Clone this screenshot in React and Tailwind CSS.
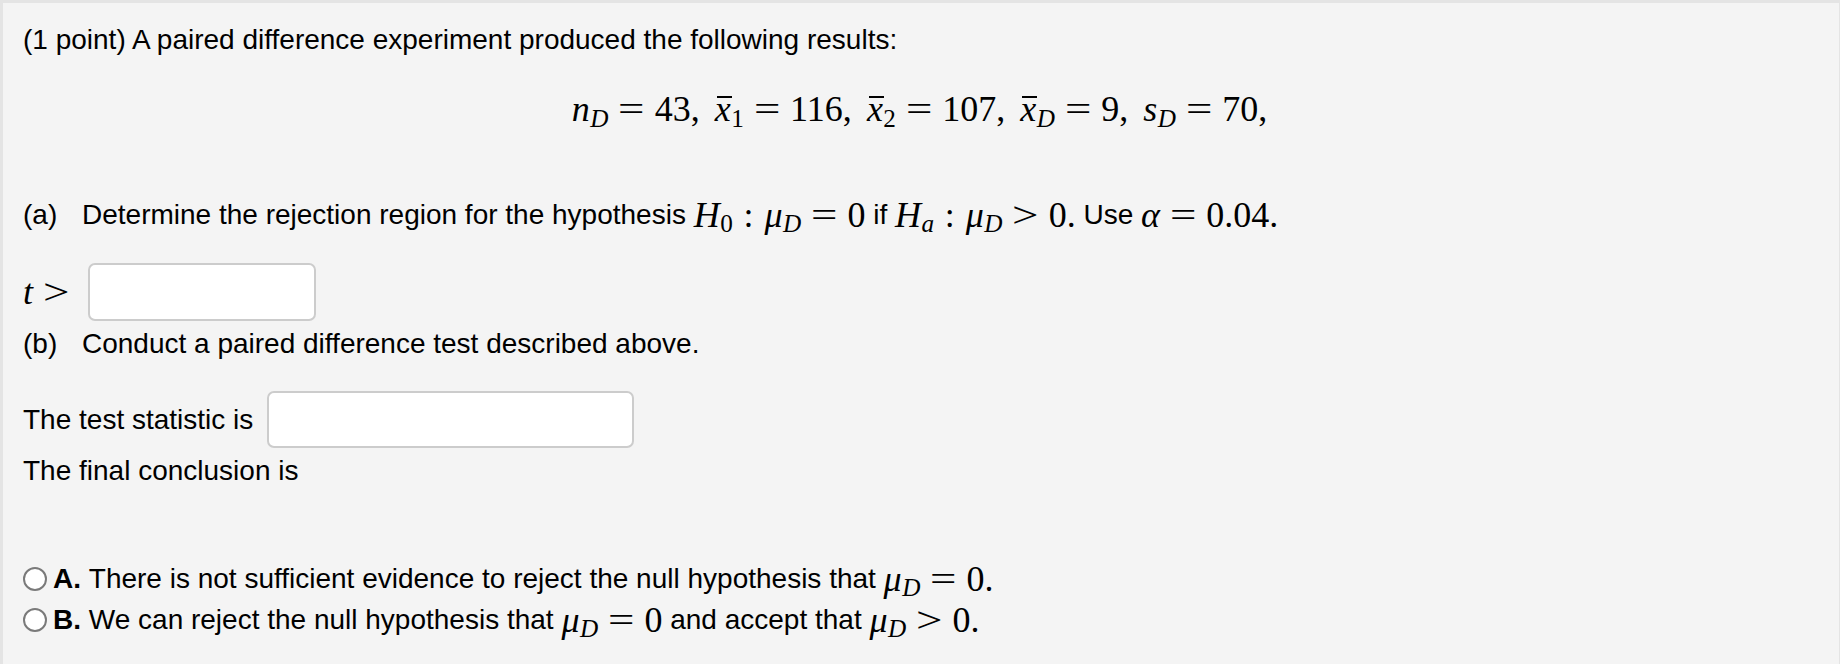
import React from "react";

function V({ children }) {
  return <span className="italic">{children}</span>;
}

function Sub({ children, it }) {
  return (
    <span className={it ? "italic text-[0.7em] relative top-[0.22em] ml-[0.02em]" : "text-[0.7em] relative top-[0.22em] ml-[0.02em]"}>
      {children}
    </span>
  );
}

function Rel({ children }) {
  return (
    <span className="mx-[0.36em]">
      <span className="inline-block scale-x-[1.3]">{children}</span>
    </span>
  );
}

function Bar({ children }) {
  return (
    <span className="relative italic">
      {children}
      <span className="absolute left-[0.06em] right-[-0.02em] top-[0.2em] h-[0.05em] bg-black" />
    </span>
  );
}

function M({ children }) {
  return (
    <span className="font-['Liberation_Serif',serif] text-[36px] whitespace-nowrap">{children}</span>
  );
}

function MuD() {
  return (
    <>
      <V>μ</V>
      <Sub it>D</Sub>
    </>
  );
}

function Radio() {
  return (
    <span className="inline-block w-[24px] h-[24px] rounded-full border-2 border-[#7a7a7a] bg-white mr-[6px]" />
  );
}

export default function App() {
  return (
    <div className="h-[664px] w-full bg-[#f4f4f4] border-t-[3px] border-l-[3px] border-r border-[#e4e4e4] pl-[20px] pt-[16px] text-black font-['Liberation_Sans',Arial,sans-serif] text-[28px]">
      <div className="h-[41px] flex items-center">
        (1 point) A paired difference experiment produced the following results:
      </div>

      <div className="h-[50px] mt-[24px] flex items-center justify-center pr-[23px]">
        <M>
          <V>n</V>
          <Sub it>D</Sub>
          <Rel>=</Rel>43,<span className="mr-[0.42em]" />
          <Bar>x</Bar>
          <Sub>1</Sub>
          <Rel>=</Rel>116,<span className="mr-[0.42em]" />
          <Bar>x</Bar>
          <Sub>2</Sub>
          <Rel>=</Rel>107,<span className="mr-[0.42em]" />
          <Bar>x</Bar>
          <Sub it>D</Sub>
          <Rel>=</Rel>9,<span className="mr-[0.42em]" />
          <V>s</V>
          <Sub it>D</Sub>
          <Rel>=</Rel>70,
        </M>
      </div>

      <div className="h-[41px] mt-[60px] flex items-center whitespace-nowrap">
        <span className="w-[59px]">(a)</span>
        <span>Determine the rejection region for the hypothesis&nbsp;</span>
        <M>
          <V>H</V>
          <Sub>0</Sub>
          <span className="mx-[0.3em]">:</span>
          <MuD />
          <Rel>=</Rel>0
        </M>
        <span>&nbsp;if&nbsp;</span>
        <M>
          <V>H</V>
          <Sub it>a</Sub>
          <span className="mx-[0.3em]">:</span>
          <MuD />
          <Rel>&gt;</Rel>0.
        </M>
        <span>&nbsp;Use&nbsp;</span>
        <M>
          <V>α</V>
          <Rel>=</Rel>0.04.
        </M>
      </div>

      <div className="mt-[28px] flex items-center">
        <span className="w-[65px]">
          <M>
            <V>t</V>
            <Rel>&gt;</Rel>
          </M>
        </span>
        <input className="w-[228px] h-[58px] bg-white border-2 border-[#cccccc] rounded-[7px]" />
      </div>

      <div className="h-[41px] mt-[2px] flex items-center">
        <span className="w-[59px]">(b)</span>
        <span>Conduct a paired difference test described above.</span>
      </div>

      <div className="mt-[27px] flex items-center">
        <span className="mr-[14px]">The test statistic is</span>
        <input className="w-[367px] h-[57px] bg-white border-2 border-[#cccccc] rounded-[7px]" />
      </div>

      <div className="h-[41px] mt-[2px] flex items-center">The final conclusion is</div>

      <div className="h-[41px] mt-[67px] flex items-center whitespace-nowrap">
        <Radio />
        <b>A.</b>
        <span>&nbsp;There is not sufficient evidence to reject the null hypothesis that&nbsp;</span>
        <M>
          <MuD />
          <Rel>=</Rel>0.
        </M>
      </div>

      <div className="h-[41px] flex items-center whitespace-nowrap">
        <Radio />
        <b>B.</b>
        <span>&nbsp;We can reject the null hypothesis that&nbsp;</span>
        <M>
          <MuD />
          <Rel>=</Rel>0
        </M>
        <span>&nbsp;and accept that&nbsp;</span>
        <M>
          <MuD />
          <Rel>&gt;</Rel>0.
        </M>
      </div>
    </div>
  );
}
